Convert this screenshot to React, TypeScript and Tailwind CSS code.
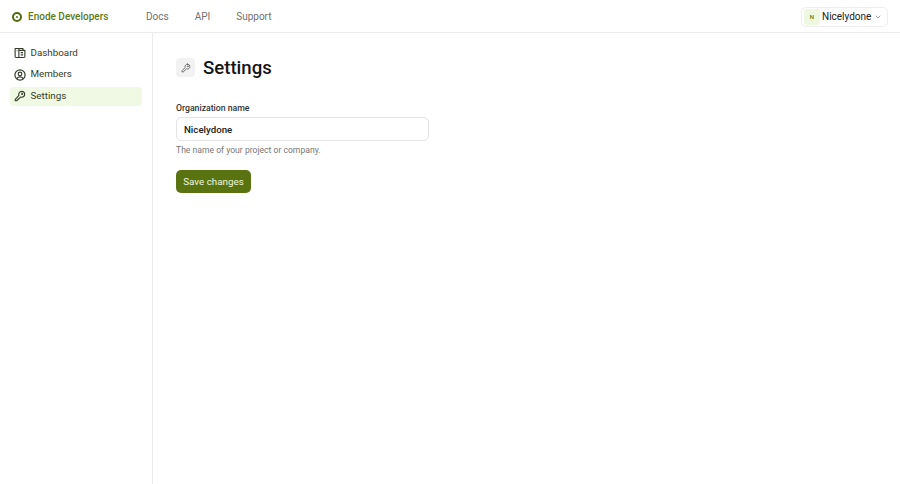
import { ChevronDown } from 'lucide-react';

function KeyIcon({ className }: { className: string }) {
  return (
    <svg viewBox="0 0 16 16" fill="none" stroke="currentColor" strokeWidth="1.5" strokeLinecap="round" strokeLinejoin="round" className={className}>
      <path d="M10.2 1.8a4 4 0 0 1 4 4c0 2.2-1.8 3.9-4 3.9-.5 0-1-.1-1.400-.3L3.500 14.300 1.700 14.300 1.700 12.400 6.600 7.300a4 4 0 0 1 3.600-5.500Z" />
      <circle cx="10.800" cy="5.200" r=".6" />
    </svg>
  );
}

function BookIcon() {
  return (
    <svg viewBox="0 0 16 16" fill="none" stroke="currentColor" strokeWidth="1.5" strokeLinejoin="round" className="h-[12px] w-[12px]">
      <path d="M1.500 2h5v12h-3.500a1.500 1.500 0 0 1-1.500-1.500Z" />
      <path d="M6.500 4.500h8v8a1.500 1.500 0 0 1-1.500 1.500h-6.500" />
      <path d="M6.500 2h5.500v2.500M3.500 5h1M9 7.500h3M9 10.500h3" />
    </svg>
  );
}

function MemberIcon() {
  return (
    <svg viewBox="0 0 16 16" fill="none" stroke="currentColor" strokeWidth="1.600" strokeLinecap="round" className="h-[12px] w-[12px]">
      <circle cx="8" cy="8" r="6.800" />
      <circle cx="8" cy="6.500" r="2.400" />
      <path d="M3.800 12.800c1-1.700 2.400-2.300 4.200-2.300s3.200.6 4.200 2.300" />
    </svg>
  );
}

const navLinks = ['Docs', 'API', 'Support'];

export default function App() {
  return (
    <div className="flex h-[484px] w-[900px] flex-col overflow-hidden bg-white font-['Roboto',sans-serif] text-[#1a1a1a]">
      {/* Top bar */}
      <header className="flex h-[33px] shrink-0 items-center border-b border-[#ececec] pl-3 pr-3 pt-px">
        <div className="flex w-[134px] items-center gap-[6px]">
          <span className="flex h-[10px] w-[10px] items-center justify-center rounded-full border-[2.5px] border-[#4e6b10]">
            <span className="h-[2px] w-[2px] rounded-full bg-[#4e6b10]" />
          </span>
          <span className="text-[10px] font-medium leading-none text-[#5c7a18]">Enode Developers</span>
        </div>
        <nav className="flex items-center gap-[26px]">
          {navLinks.map((link) => (
            <a key={link} className="text-[10px] leading-none text-[#707070]">{link}</a>
          ))}
        </nav>
        <button className="ml-auto flex h-[20px] w-[87px] items-center rounded-[5px] border border-[#eeeeee] pl-[2px]">
          <span className="flex h-[16px] w-[16px] items-center justify-center rounded-[3px] bg-[#eef7df] text-[6px] font-medium text-[#5c7a18]">N</span>
          <span className="ml-[2px] text-[10px] leading-none text-[#222222]">Nicelydone</span>
          <ChevronDown className="ml-[3px] h-[8px] w-[8px] text-[#777777]" />
        </button>
      </header>

      <div className="flex flex-1">
        {/* Sidebar */}
        <aside className="flex w-[153px] shrink-0 flex-col gap-[2.5px] border-r border-[#ececec] pl-[10px] pr-[10px] pt-[10.5px]">
          <a className="flex h-[19px] items-center gap-[5px] rounded-[4px] pl-[3.500px] text-[9.8px] text-[#333d2a]">
            <BookIcon />
            Dashboard
          </a>
          <a className="flex h-[19px] items-center gap-[5px] rounded-[4px] pl-[3.500px] text-[9.8px] text-[#333d2a]">
            <MemberIcon />
            Members
          </a>
          <a className="flex h-[19px] items-center gap-[5px] rounded-[4px] bg-[#f0f9e4] pl-[3.500px] text-[9.8px] text-[#333d2a]">
            <KeyIcon className="h-[12px] w-[12px]" />
            Settings
          </a>
        </aside>

        {/* Main */}
        <main className="flex flex-1 flex-col items-start pl-[23px] pt-[25px]">
          <div className="flex items-center gap-[8px]">
            <span className="flex h-[19px] w-[19px] items-center justify-center rounded-[4px] bg-[#f2f2f2] text-[#666666]">
              <KeyIcon className="h-[10px] w-[10px]" />
            </span>
            <h1 className="pt-px text-[18.6px] font-medium leading-none text-[#151515]">Settings</h1>
          </div>
          <label className="mt-[26px] text-[8.7px] font-medium leading-none text-[#333333]">Organization name</label>
          <input
            readOnly
            value="Nicelydone"
            className="mt-[5px] h-[24px] w-[253px] rounded-[5px] border border-[#e4e4e4] px-[7px] pt-px text-[9.7px] font-medium text-[#222222] outline-none"
          />
          <p className="mt-[4px] text-[8.6px] leading-[11px] text-[#777777]">The name of your project or company.</p>
          <button className="mt-[14px] h-[23px] w-[75px] rounded-[5px] bg-[#5a7311] pt-px text-[9.8px] text-[#eef7df]">Save changes</button>
        </main>
      </div>
    </div>
  );
}
